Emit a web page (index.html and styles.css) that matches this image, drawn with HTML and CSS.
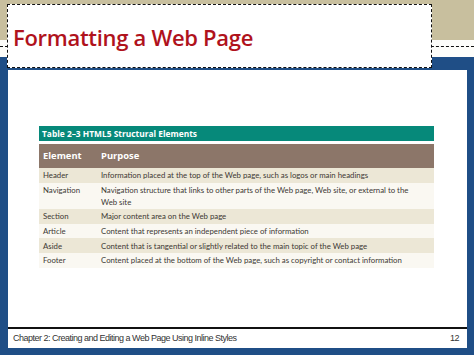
FILE: index.html
```html
<!DOCTYPE html>
<html>
<head>
<meta charset="utf-8">
<link rel="stylesheet" href="styles.css">
</head>
<body>
<div class="slide">
  <div class="band"></div>
  <div class="rule"><div class="dash"></div></div>
  <div class="frame">
    <div class="panel">
      <div class="content">
        <div class="tbl">
          <div class="caption">Table 2–3 HTML5 Structural Elements</div>
          <div class="row head">
            <div class="c1">Element</div>
            <div class="c2">Purpose</div>
          </div>
          <div class="row shade">
            <div class="c1">Header</div>
            <div class="c2">Information placed at the top of the Web page, such as logos or main headings</div>
          </div>
          <div class="row">
            <div class="c1">Navigation</div>
            <div class="c2">Navigation structure that links to other parts of the Web page, Web site, or external to the<br>Web site</div>
          </div>
          <div class="row shade">
            <div class="c1">Section</div>
            <div class="c2">Major content area on the Web page</div>
          </div>
          <div class="row">
            <div class="c1">Article</div>
            <div class="c2">Content that represents an independent piece of information</div>
          </div>
          <div class="row shade">
            <div class="c1">Aside</div>
            <div class="c2">Content that is tangential or slightly related to the main topic of the Web page</div>
          </div>
          <div class="row">
            <div class="c1">Footer</div>
            <div class="c2">Content placed at the bottom of the Web page, such as copyright or contact information</div>
          </div>
        </div>
      </div>
      <div class="foot">
        <span>Chapter 2: Creating and Editing a Web Page Using Inline Styles</span>
        <span>12</span>
      </div>
    </div>
  </div>
  <div class="title"><h1>Formatting a Web Page</h1></div>
</div>
</body>
</html>
```

FILE: styles.css
```css
* { box-sizing: border-box; }
html, body { margin: 0; padding: 0; }
body { background: #1f4e86; }
.slide {
  position: relative;
  width: 474px;
  height: 355px;
  display: flex;
  flex-direction: column;
  overflow: hidden;
}
.band { height: 40px; background: #c8bf9e; }
.rule {
  height: 17px;
  background: #fdfdfa;
  padding-top: 6px;
}
.dash { border-top: 1.5px dashed #111; }
.frame {
  flex: 1;
  background: #1f4e86;
  padding: 13px 7px 7px 8px;
  display: flex;
}
.panel {
  flex: 1;
  background: #fff;
  display: flex;
  flex-direction: column;
}
.content {
  flex: 1;
  padding: 56px 0 0 31px;
}
.tbl {
  width: 395px;
  font-family: "Lato", "Open Sans", sans-serif;
  font-size: 7.8px;
  color: #3d3834;
}
.caption {
  background: #06897a;
  color: #fff;
  font-family: "Open Sans", sans-serif;
  font-weight: 700;
  font-size: 8.4px;
  height: 15px;
  line-height: 15px;
  padding-left: 3px;
  margin-bottom: 3px;
}
.row { display: flex; background: #faf8f2; }
.row.shade { background: #ece7d6; }
.row .c1 { flex: 0 0 58px; padding: 1.3px 0 1.3px 4px; line-height: 12px; }
.row .c2 { flex: 1 1 0; min-width: 0; white-space: nowrap; padding: 1.3px 2px 1.3px 4px; line-height: 12px; }
.row.head {
  background: #8c7669;
  color: #fff;
  font-family: "Open Sans", sans-serif;
  font-weight: 700;
  font-size: 9.4px;
  height: 24px;
  align-items: center;
}
.row.head .c1, .row.head .c2 { padding-top: 0; padding-bottom: 0; }
.foot {
  height: 21px;
  border-top: 2px solid #111;
  display: flex;
  justify-content: space-between;
  align-items: center;
  padding: 0 8px 1px 5px;
  font-family: "Liberation Sans", Arial, sans-serif;
  font-size: 9px;
  letter-spacing: -0.5px;
  color: #333;
}
.title {
  position: absolute;
  left: 7px;
  top: 4px;
  width: 425px;
  height: 64px;
  background: #fff;
  border: 1.5px dashed #111;
  padding: 19px 0 0 5px;
}
.title h1 {
  margin: 0;
  font-family: "Open Sans", sans-serif;
  font-weight: 600;
  font-size: 22px;
  line-height: 26px;
  color: #b0121c;
  letter-spacing: -0.3px;
}
```
